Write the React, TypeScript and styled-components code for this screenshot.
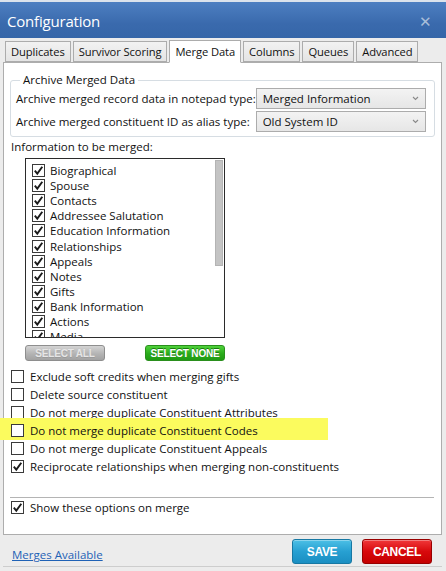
import React from 'react';
import styled, { createGlobalStyle } from 'styled-components';

const GlobalStyle = createGlobalStyle`
  html, body {
    margin: 0;
    padding: 0;
    background: #ececec;
  }
  body {
    font-family: 'Open Sans', 'Noto Sans', sans-serif;
    font-size: 11px;
    color: #111;
  }
`;

const Page = styled.div`
  width: 446px;
  height: 571px;
  overflow: hidden;
  display: flex;
  flex-direction: column;
  background: #ececec;
  border-top: 2px solid #dbe3ec;
`;

const TitleBar = styled.div`
  height: 36px;
  flex: none;
  display: flex;
  align-items: center;
  justify-content: space-between;
  padding: 2px 14px 0 7px;
  box-sizing: border-box;
  background: linear-gradient(#4d7fc1, #3a6aad 60%, #3566a8);
  color: #fff;
  font-size: 15px;
  letter-spacing: -0.2px;
`;

const CloseGlyph = styled.span`
  color: #a9bed9;
  font-size: 15px;
  line-height: 1;
`;

const Body = styled.div`
  flex: 1;
  display: flex;
  flex-direction: column;
  padding: 0 4px 0 3px;
`;

const TabStrip = styled.div`
  height: 24px;
  flex: none;
  display: flex;
  align-items: flex-end;
  gap: 2px;
  padding-left: 2px;
  position: relative;
  z-index: 1;
`;

const Tab = styled.div<{ $active?: boolean }>`
  height: ${(p) => (p.$active ? '23px' : '21px')};
  box-sizing: border-box;
  padding: 0 5px;
  display: flex;
  align-items: center;
  border: 1px solid #acacac;
  border-bottom-color: ${(p) => (p.$active ? '#fff' : '#acacac')};
  background: ${(p) => (p.$active ? '#fff' : 'linear-gradient(#f2f2f2, #e4e4e4)')};
  margin-bottom: ${(p) => (p.$active ? '-1px' : '0')};
  font-size: 11.2px;
  letter-spacing: -0.1px;
  color: #111;
  white-space: nowrap;
`;

const Panel = styled.div`
  height: 473px;
  flex: none;
  box-sizing: border-box;
  background: #fff;
  border: 1px solid #adadad;
  display: flex;
  flex-direction: column;
`;

const GroupBox = styled.fieldset`
  margin: 9px 8px 0 6px;
  padding: 0 8px 4px 5px;
  border: 1px solid #d6dde3;
  border-radius: 3px;
  display: grid;
  grid-template-columns: 1fr 170px;
  row-gap: 2px;
  align-items: center;
`;

const Legend = styled.legend`
  padding: 0 3px;
  margin-left: 4px;
  font-size: 11.5px;
  line-height: 16px;
`;

const FieldLabel = styled.span`
  font-size: 11.5px;
  white-space: nowrap;
`;

const Select = styled.div`
  height: 21px;
  box-sizing: border-box;
  border: 1px solid #acacac;
  background: linear-gradient(#f3f3f3, #e6e6e6);
  display: flex;
  align-items: center;
  justify-content: space-between;
  padding: 0 6px 1px 6px;
  font-size: 11.5px;
`;

const SectionLabel = styled.div`
  margin: 3px 0 0 7px;
  line-height: 14px;
  font-size: 11.5px;
`;

const ListBox = styled.div`
  margin: 4px 0 0 21px;
  width: 200px;
  height: 180px;
  box-sizing: border-box;
  border: 1px solid #2b2b2b;
  display: flex;
  overflow: hidden;
`;

const ListItems = styled.div`
  flex: 1;
  padding: 4px 0 0 6px;
  display: flex;
  flex-direction: column;
`;

const ListItem = styled.div`
  height: 15.1px;
  flex: none;
  display: flex;
  align-items: center;
  gap: 5px;
  font-size: 11.5px;
`;

const ScrollTrack = styled.div`
  width: 9px;
  padding: 1px 1px 0 0;
  box-sizing: border-box;
`;

const ScrollThumb = styled.div`
  height: 106px;
  background: #c4c4c4;
  border: 1px solid #b4b4b4;
  box-sizing: border-box;
`;

const ButtonRow = styled.div`
  margin: 7px 0 0 21px;
  display: flex;
  gap: 40px;
`;

const SmallButton = styled.div<{ $variant: 'disabled' | 'green' }>`
  width: 80px;
  height: 16px;
  box-sizing: border-box;
  border-radius: 3px;
  display: flex;
  align-items: center;
  justify-content: center;
  font-family: 'Liberation Sans', Arial, sans-serif;
  font-size: 10px;
  font-weight: bold;
  letter-spacing: -0.2px;
  border: 1px solid ${(p) => (p.$variant === 'green' ? '#2a8f1d' : '#8e8e8e')};
  background: ${(p) =>
    p.$variant === 'green'
      ? 'linear-gradient(#4fd23a, #2aab1b 55%, #1f9a12)'
      : 'linear-gradient(#d4d4d4, #b4b4b4 55%, #a2a2a2)'};
  color: ${(p) => (p.$variant === 'green' ? '#fff' : '#e6e6e6')};
  text-shadow: ${(p) => (p.$variant === 'green' ? '0 -1px 0 #1a7a10' : '0 1px 0 #9a9a9a')};
`;

const Options = styled.div`
  margin-top: 6px;
  display: flex;
  flex-direction: column;
`;

const OptionRow = styled.div<{ $highlight?: boolean }>`
  position: relative;
  height: 18px;
  display: flex;
  align-items: center;
  gap: 6px;
  padding-left: 7px;
  font-size: 11.5px;

  &::before {
    content: '';
    display: ${(p) => (p.$highlight ? 'block' : 'none')};
    position: absolute;
    left: -4px;
    top: -3px;
    width: 328px;
    height: 22px;
    background: #fbfb5e;
  }

  & > * {
    position: relative;
  }
`;

const Separator = styled.div`
  margin: 22px 7px 0 6px;
  height: 1px;
  background: #b4b4b4;
`;

const Box = styled.span`
  width: 13px;
  height: 13px;
  flex: none;
  box-sizing: border-box;
  border: 1px solid #3a3a3a;
  background: #fff;
  display: flex;
  align-items: center;
  justify-content: center;
`;

const Footer = styled.div`
  height: 32px;
  flex: none;
  box-sizing: border-box;
  border-bottom: 1px solid #cdcdcd;
  display: flex;
  align-items: flex-start;
  justify-content: space-between;
  padding: 4px 10px 0 9px;
`;

const LinkText = styled.a`
  margin-top: 8px;
  color: #1f62b6;
  text-decoration: underline;
  font-size: 11.5px;
  cursor: pointer;
`;

const FooterButtons = styled.div`
  display: flex;
  gap: 10px;
`;

const ActionButton = styled.div<{ $tone: 'blue' | 'red'; $width: number }>`
  width: ${(p) => p.$width}px;
  height: 25px;
  box-sizing: border-box;
  border-radius: 3px;
  display: flex;
  align-items: center;
  justify-content: center;
  font-family: 'Liberation Sans', Arial, sans-serif;
  font-weight: bold;
  font-size: 12px;
  letter-spacing: -0.3px;
  color: #fff;
  border: 1px solid ${(p) => (p.$tone === 'blue' ? '#1778a3' : '#980000')};
  background: ${(p) =>
    p.$tone === 'blue'
      ? 'linear-gradient(#4cc0e6, #27a0d2 50%, #1b8fc2)'
      : 'linear-gradient(#f0383a, #d8090c 50%, #c40000)'};
  box-shadow: inset 0 1px 0 rgba(255, 255, 255, 0.35);
`;

const Check = () => (
  <svg width="11" height="11" viewBox="0 0 11 11">
    <path d="M1.8 5.6 L4.3 8.6 L9.3 1.8" fill="none" stroke="#1a1a1a" strokeWidth="1.9" />
  </svg>
);

const Checkbox = ({ checked }: { checked?: boolean }) => <Box>{checked && <Check />}</Box>;

const Chevron = () => (
  <svg width="7" height="5" viewBox="0 0 7 5">
    <path d="M1 1 L3.5 3.5 L6 1" fill="none" stroke="#8a8a8a" strokeWidth="1.1" />
  </svg>
);

const tabs = ['Duplicates', 'Survivor Scoring', 'Merge Data', 'Columns', 'Queues', 'Advanced'];

const mergeItems = [
  'Biographical',
  'Spouse',
  'Contacts',
  'Addressee Salutation',
  'Education Information',
  'Relationships',
  'Appeals',
  'Notes',
  'Gifts',
  'Bank Information',
  'Actions',
  'Media',
];

const options = [
  { label: 'Exclude soft credits when merging gifts' },
  { label: 'Delete source constituent' },
  { label: 'Do not merge duplicate Constituent Attributes' },
  { label: 'Do not merge duplicate Constituent Codes', highlight: true },
  { label: 'Do not merge duplicate Constituent Appeals' },
  { label: 'Reciprocate relationships when merging non-constituents', checked: true },
];

const App = () => {
  return (
    <>
      <GlobalStyle />
      <Page>
        <TitleBar>
          <span>Configuration</span>
          <CloseGlyph>✕</CloseGlyph>
        </TitleBar>
        <Body>
          <TabStrip>
            {tabs.map((t) => (
              <Tab key={t} $active={t === 'Merge Data'}>
                {t}
              </Tab>
            ))}
          </TabStrip>

          <Panel>
            <GroupBox>
              <Legend>Archive Merged Data</Legend>
              <FieldLabel>Archive merged record data in notepad type:</FieldLabel>
              <Select>
                Merged Information
                <Chevron />
              </Select>
              <FieldLabel>Archive merged constituent ID as alias type:</FieldLabel>
              <Select>
                Old System ID
                <Chevron />
              </Select>
            </GroupBox>

            <SectionLabel>Information to be merged:</SectionLabel>
            <ListBox>
              <ListItems>
                {mergeItems.map((item) => (
                  <ListItem key={item}>
                    <Checkbox checked />
                    {item}
                  </ListItem>
                ))}
              </ListItems>
              <ScrollTrack>
                <ScrollThumb />
              </ScrollTrack>
            </ListBox>

            <ButtonRow>
              <SmallButton $variant="disabled">SELECT ALL</SmallButton>
              <SmallButton $variant="green">SELECT NONE</SmallButton>
            </ButtonRow>

            <Options>
              {options.map((o) => (
                <OptionRow key={o.label} $highlight={o.highlight}>
                  <Checkbox checked={o.checked} />
                  <span>{o.label}</span>
                </OptionRow>
              ))}
            </Options>

            <Separator />
            <OptionRow>
              <Checkbox checked />
              <span>Show these options on merge</span>
            </OptionRow>
          </Panel>

          <Footer>
            <LinkText>Merges Available</LinkText>
            <FooterButtons>
              <ActionButton $tone="blue" $width={60}>
                SAVE
              </ActionButton>
              <ActionButton $tone="red" $width={70}>
                CANCEL
              </ActionButton>
            </FooterButtons>
          </Footer>
        </Body>
      </Page>
    </>
  );
};

export default App;
